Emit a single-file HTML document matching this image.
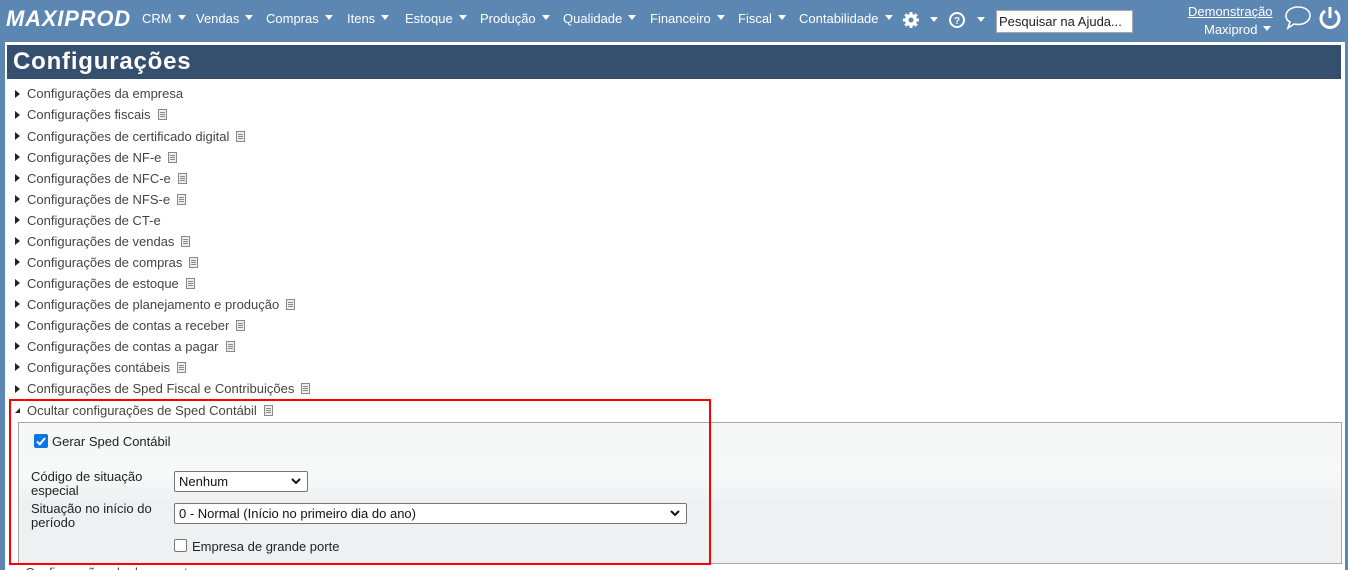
<!DOCTYPE html>
<html><head><meta charset="utf-8"><style>
*{margin:0;padding:0;box-sizing:border-box}
html,body{width:1348px;height:570px;overflow:hidden}
body{background:#5b87b2;font-family:"Liberation Sans",sans-serif;font-size:13px;position:relative}
.nav{position:absolute;top:11px;color:#fff;font-size:13px;white-space:nowrap}
.car{display:inline-block;width:0;height:0;border-left:4px solid transparent;border-right:4px solid transparent;border-top:5px solid #fff;vertical-align:middle;margin-left:6px;position:relative;top:-2px}
.logo{position:absolute;left:6px;top:6px;color:#fff;font-weight:bold;font-style:italic;font-size:22px;letter-spacing:0.8px}
.page{position:absolute;left:5px;top:42px;width:1340px;height:540px;background:#fff}
.hdr{position:absolute;left:7px;top:45px;width:1334px;height:34px;background:#34506e;color:#fff;font-weight:bold;font-size:24px;letter-spacing:0.8px;padding:3px 0 0 6px}
.row{position:absolute;left:15px;color:#444;height:21px;line-height:21px;white-space:nowrap}
.tri{display:inline-block;width:0;height:0;border-top:4px solid transparent;border-bottom:4px solid transparent;border-left:5px solid #222;margin-right:7px;vertical-align:middle;position:relative;top:-1px}
.doc{display:inline-block;width:9px;height:11px;border:1px solid #888;background:#eee;margin-left:7px;vertical-align:middle;position:relative;top:-1px;background-image:linear-gradient(#888,#888),linear-gradient(#888,#888),linear-gradient(#888,#888);background-size:5px 1px;background-repeat:no-repeat;background-position:1px 2px,1px 4px,1px 6px}
.panel{position:absolute;left:18px;top:422px;width:1324px;height:142px;border:1px solid #a0a8b0;background:linear-gradient(#f6f7f7 0,#f7f8f8 55px,#eff0f2 80px,#eff0f2 100%)}
.red{position:absolute;left:9px;top:399px;width:702px;height:166px;border:2px solid #f00}
.lbl{position:absolute;color:#222;line-height:14px}
.sel{position:absolute;background:#fff;border:1px solid #767676;border-radius:2px;height:21px;color:#111;padding:2px 0 0 4px}
.sel svg{position:absolute;right:6px;top:6px}
</style></head><body>
<div class="logo">MAXIPROD</div>
<div class="nav" style="left:142px">CRM<span class="car"></span></div>
<div class="nav" style="left:196px">Vendas<span class="car"></span></div>
<div class="nav" style="left:266px">Compras<span class="car"></span></div>
<div class="nav" style="left:347px">Itens<span class="car"></span></div>
<div class="nav" style="left:405px">Estoque<span class="car"></span></div>
<div class="nav" style="left:480px">Produção<span class="car"></span></div>
<div class="nav" style="left:563px">Qualidade<span class="car"></span></div>
<div class="nav" style="left:650px">Financeiro<span class="car"></span></div>
<div class="nav" style="left:738px">Fiscal<span class="car"></span></div>
<div class="nav" style="left:799px">Contabilidade<span class="car"></span></div>
<svg style="position:absolute;left:902px;top:11px" width="18" height="18" viewBox="0 0 18 18"><g fill="#fff"><circle cx="9" cy="9" r="6"/><g stroke="#fff" stroke-width="3"><line x1="9" y1="1" x2="9" y2="17"/><line x1="1" y1="9" x2="17" y2="9"/><line x1="3.3" y1="3.3" x2="14.7" y2="14.7"/><line x1="14.7" y1="3.3" x2="3.3" y2="14.7"/></g></g><circle cx="9" cy="9" r="2.5" fill="#5b87b2"/></svg>
<span class="car" style="position:absolute;left:930px;top:17px;margin:0"></span>
<svg style="position:absolute;left:948px;top:11px" width="18" height="18" viewBox="0 0 18 18"><circle cx="9" cy="9" r="7" fill="none" stroke="#fff" stroke-width="2"/><text x="9" y="13" font-size="10" font-weight="bold" fill="#fff" text-anchor="middle" font-family="Liberation Sans">?</text></svg>
<span class="car" style="position:absolute;left:977px;top:17px;margin:0"></span>
<div style="position:absolute;left:996px;top:10px;width:137px;height:23px;background:#fff;border:1px solid #aaa;color:#222;padding:3px 0 0 2px;font-size:13px">Pesquisar na Ajuda...</div>
<div style="position:absolute;left:1188px;top:4px;color:#fff;text-decoration:underline">Demonstração</div>
<div style="position:absolute;left:1204px;top:22px;color:#fff">Maxiprod<span class="car"></span></div>
<svg style="position:absolute;left:1284px;top:5px" width="28" height="26" viewBox="0 0 28 26"><path d="M14 2C7 2 2 6 2 11c0 3 2 5 4 6l-2 6 6-4c1 0 3 .5 4 .5 7 0 12-4 12-9S21 2 14 2z" fill="none" stroke="#fff" stroke-width="1.6"/></svg>
<svg style="position:absolute;left:1317px;top:5px" width="26" height="26" viewBox="0 0 26 26"><path d="M8 6A9 9 0 1 0 18 6" fill="none" stroke="#fff" stroke-width="3"/><line x1="13" y1="2" x2="13" y2="13" stroke="#fff" stroke-width="3"/></svg>
<div class="page"></div>
<div class="hdr">Configurações</div>
<div class="row" style="top:83px"><span class="tri"></span>Configurações da empresa</div>
<div class="row" style="top:104px"><span class="tri"></span>Configurações fiscais<span class="doc"></span></div>
<div class="row" style="top:125.5px"><span class="tri"></span>Configurações de certificado digital<span class="doc"></span></div>
<div class="row" style="top:146.5px"><span class="tri"></span>Configurações de NF-e<span class="doc"></span></div>
<div class="row" style="top:167.5px"><span class="tri"></span>Configurações de NFC-e<span class="doc"></span></div>
<div class="row" style="top:188.5px"><span class="tri"></span>Configurações de NFS-e<span class="doc"></span></div>
<div class="row" style="top:209.5px"><span class="tri"></span>Configurações de CT-e</div>
<div class="row" style="top:230.5px"><span class="tri"></span>Configurações de vendas<span class="doc"></span></div>
<div class="row" style="top:251.5px"><span class="tri"></span>Configurações de compras<span class="doc"></span></div>
<div class="row" style="top:272.5px"><span class="tri"></span>Configurações de estoque<span class="doc"></span></div>
<div class="row" style="top:293.5px"><span class="tri"></span>Configurações de planejamento e produção<span class="doc"></span></div>
<div class="row" style="top:314.5px"><span class="tri"></span>Configurações de contas a receber<span class="doc"></span></div>
<div class="row" style="top:335.5px"><span class="tri"></span>Configurações de contas a pagar<span class="doc"></span></div>
<div class="row" style="top:356.5px"><span class="tri"></span>Configurações contábeis<span class="doc"></span></div>
<div class="row" style="top:378px"><span class="tri"></span>Configurações de Sped Fiscal e Contribuições<span class="doc"></span></div>
<div class="row" style="top:399.5px"><span class="tri" style="border:none;border-bottom:5px solid #222;border-left:5px solid transparent;width:0;margin-right:7px"></span>Ocultar configurações de Sped Contábil<span class="doc"></span></div>
<div class="panel"></div>
<div class="row" style="top:562px">▸ Configurações de documentos</div>
<svg style="position:absolute;left:34px;top:434px" width="14" height="14" viewBox="0 0 14 14"><rect width="14" height="14" rx="2" fill="#0b75e3"/><path d="M3 7.5l2.8 2.8L11 4" fill="none" stroke="#fff" stroke-width="2"/></svg>
<div class="lbl" style="left:52px;top:435px">Gerar Sped Contábil</div>
<div class="lbl" style="left:31px;top:470px">Código de situação<br>especial</div>
<div class="sel" style="left:174px;top:471px;width:134px">Nenhum<svg width="10" height="7" viewBox="0 0 10 7"><path d="M1 1l4 4 4-4" fill="none" stroke="#111" stroke-width="2"/></svg></div>
<div class="lbl" style="left:31px;top:502px">Situação no início do<br>período</div>
<div class="sel" style="left:174px;top:503px;width:513px">0 - Normal (Início no primeiro dia do ano)<svg width="10" height="7" viewBox="0 0 10 7"><path d="M1 1l4 4 4-4" fill="none" stroke="#111" stroke-width="2"/></svg></div>
<div style="position:absolute;left:174px;top:539px;width:13px;height:13px;border:1px solid #767676;border-radius:2px;background:#fff"></div>
<div class="lbl" style="left:192px;top:540px">Empresa de grande porte</div>
<div class="red"></div>
</body></html>
